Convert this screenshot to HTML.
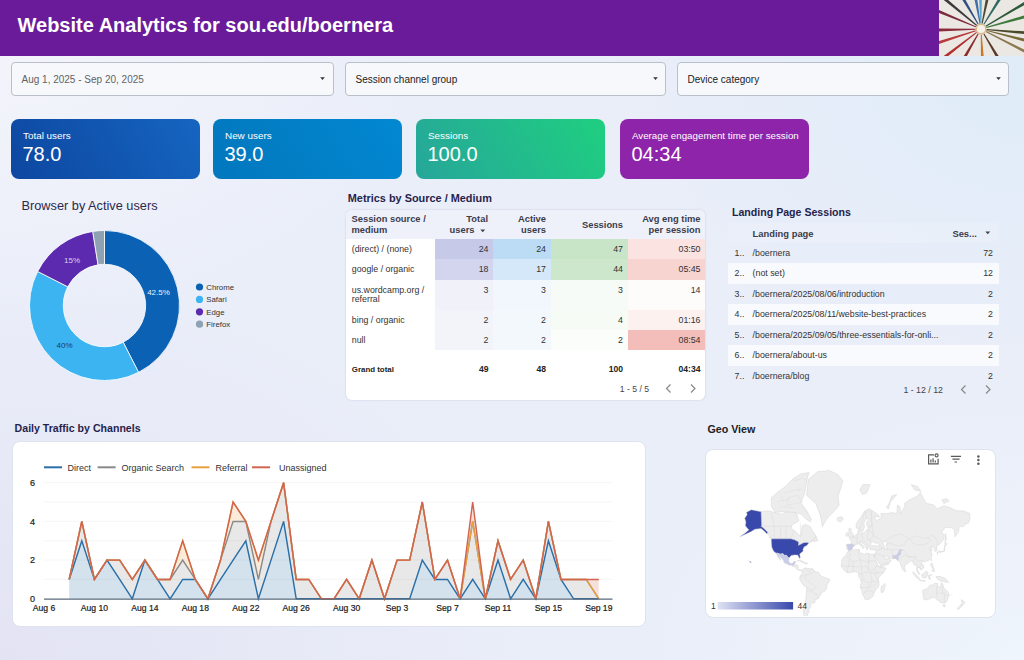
<!DOCTYPE html>
<html><head><meta charset="utf-8"><style>
html,body{margin:0;padding:0;}
body{width:1024px;height:660px;overflow:hidden;position:relative;font-family:"Liberation Sans", sans-serif;background:radial-gradient(ellipse 420px 260px at 0px 60px, rgba(244,245,251,0.9), rgba(244,245,251,0) 100%),radial-gradient(ellipse 380px 260px at 1024px 660px, rgba(240,246,252,0.85), rgba(240,246,252,0) 100%),radial-gradient(ellipse 520px 380px at 0px 660px, rgba(226,226,243,0.9), rgba(226,226,243,0) 100%),radial-gradient(ellipse 420px 300px at 1024px 80px, rgba(222,236,248,0.9), rgba(222,236,248,0) 100%),#eaeef9;}
.t{position:absolute;white-space:nowrap;font-family:"Liberation Sans", sans-serif;}
</style></head><body>
<div style="position:absolute;left:0px;top:0px;width:1024px;height:56px;background:#6a1b9a;"></div><div class="t" style="left:17.5px;top:15.37px;font-size:20px;line-height:20px;font-weight:bold;color:#ffffff;">Website Analytics for sou.edu/boernera</div><svg style="position:absolute;left:939px;top:0" width="85" height="56" viewBox="0 0 85 56"><rect width="85" height="56" fill="#ebe8e4"/><path d="M38.08,25.11 L4.88,-3.71 L2.96,-1.40 L37.45,25.88Z" fill="#3a3a3a"/><path d="M39.65,24.00 L24.27,-4.21 L21.68,-2.69 L38.79,24.51Z" fill="#2f4f7f"/><path d="M41.56,23.50 L37.80,-4.20 L34.84,-3.69 L40.57,23.66Z" fill="#3f6fa8"/><path d="M42.41,23.49 L42.93,-4.03 L39.93,-3.97 L41.41,23.51Z" fill="#5aa6d0"/><path d="M43.60,23.72 L50.28,-3.61 L47.34,-4.22 L42.62,23.51Z" fill="#4a4a30"/><path d="M45.33,24.59 L63.38,-2.61 L60.83,-4.19 L44.48,24.06Z" fill="#2f6a60"/><path d="M46.99,26.63 L89.21,2.86 L87.68,0.27 L46.48,25.77Z" fill="#2f5a3a"/><path d="M47.43,28.00 L89.26,17.37 L88.45,14.48 L47.16,27.04Z" fill="#3c7a3a"/><path d="M47.44,29.97 L88.86,34.54 L89.11,31.55 L47.52,28.97Z" fill="#4a4a2a"/><path d="M47.20,30.85 L88.50,42.44 L89.25,39.54 L47.45,29.88Z" fill="#7a6a3a"/><path d="M46.67,31.95 L87.88,54.16 L89.24,51.49 L47.12,31.06Z" fill="#8a7a50"/><path d="M44.37,33.99 L58.75,60.21 L61.33,58.68 L45.23,33.48Z" fill="#5a3a2a"/><path d="M41.77,34.52 L41.99,60.07 L44.99,59.92 L42.76,34.47Z" fill="#c8782a"/><path d="M38.82,33.51 L23.10,58.71 L25.70,60.21 L39.68,34.01Z" fill="#8a2a2a"/><path d="M37.34,31.96 L2.92,57.26 L4.75,59.63 L37.95,32.76Z" fill="#b03030"/><path d="M36.61,30.20 L-4.27,42.19 L-3.35,45.04 L36.91,31.15Z" fill="#b83a3a"/><path d="M36.49,28.63 L-4.03,28.60 L-3.96,31.59 L36.51,29.63Z" fill="#8a2a3a"/><path d="M37.12,26.42 L-3.12,8.58 L-4.27,11.35 L36.73,27.35Z" fill="#7a2a3a"/><circle cx="42" cy="29" r="4.8" fill="#f6f1e8" stroke="#d9b98c" stroke-width="1.4"/></svg><div style="position:absolute;left:11px;top:62px;width:323px;height:34px;box-sizing:border-box;background:#f7f8fb;border:1px solid #b9c0c9;border-radius:4px;"></div><div class="t" style="left:21.5px;top:74.73px;font-size:10px;line-height:10px;font-weight:normal;color:#5f6368;">Aug 1, 2025 - Sep 20, 2025</div><svg style="position:absolute;left:319px;top:76px" width="7" height="5"><path d="M1.2 1.3 L5.8 1.3 L3.5 3.9Z" fill="#333"/></svg><div style="position:absolute;left:345px;top:62px;width:321px;height:34px;box-sizing:border-box;background:#f7f8fb;border:1px solid #b9c0c9;border-radius:4px;"></div><div class="t" style="left:355.5px;top:74.73px;font-size:10px;line-height:10px;font-weight:normal;color:#202124;">Session channel group</div><svg style="position:absolute;left:652px;top:76px" width="7" height="5"><path d="M1.2 1.3 L5.8 1.3 L3.5 3.9Z" fill="#333"/></svg><div style="position:absolute;left:677px;top:62px;width:332px;height:34px;box-sizing:border-box;background:#f7f8fb;border:1px solid #b9c0c9;border-radius:4px;"></div><div class="t" style="left:687.5px;top:74.73px;font-size:10px;line-height:10px;font-weight:normal;color:#202124;">Device category</div><svg style="position:absolute;left:995px;top:76px" width="7" height="5"><path d="M1.2 1.3 L5.8 1.3 L3.5 3.9Z" fill="#333"/></svg><div style="position:absolute;left:11px;top:119px;width:189px;height:60px;background:linear-gradient(60deg,#0d47a1 0%,#1565c0 100%);border-radius:8px;"></div><div class="t" style="left:23.0px;top:131.22px;font-size:9.9px;line-height:9.9px;font-weight:normal;color:#ffffff;">Total users</div><div class="t" style="left:22.5px;top:143.57px;font-size:20px;line-height:20px;font-weight:normal;color:#ffffff;">78.0</div><div style="position:absolute;left:213px;top:119px;width:189px;height:60px;background:linear-gradient(60deg,#0277bd 0%,#0288d1 100%);border-radius:8px;"></div><div class="t" style="left:225.0px;top:131.22px;font-size:9.9px;line-height:9.9px;font-weight:normal;color:#ffffff;">New users</div><div class="t" style="left:224.5px;top:143.57px;font-size:20px;line-height:20px;font-weight:normal;color:#ffffff;">39.0</div><div style="position:absolute;left:416px;top:119px;width:189px;height:60px;background:linear-gradient(60deg,#26a69a 0%,#1fcf80 100%);border-radius:8px;"></div><div class="t" style="left:428.0px;top:131.22px;font-size:9.9px;line-height:9.9px;font-weight:normal;color:#ffffff;">Sessions</div><div class="t" style="left:427.5px;top:143.57px;font-size:20px;line-height:20px;font-weight:normal;color:#ffffff;">100.0</div><div style="position:absolute;left:620px;top:119px;width:189px;height:60px;background:#8e24aa;border-radius:8px;"></div><div class="t" style="left:632.0px;top:131.35px;font-size:9.75px;line-height:9.75px;font-weight:normal;color:#ffffff;">Average engagement time per session</div><div class="t" style="left:631.5px;top:143.57px;font-size:20px;line-height:20px;font-weight:normal;color:#ffffff;">04:34</div><div class="t" style="left:21.5px;top:199.81px;font-size:12.75px;line-height:12.75px;font-weight:normal;color:#2c2a4a;">Browser by Active users</div><svg style="position:absolute;left:0;top:0" width="300" height="400"><path d="M104.50,230.50 A75,75 0 0 1 138.55,372.33 L123.20,342.21 A41.2,41.2 0 0 0 104.50,264.30Z" fill="#0b62b4" stroke="#ffffff" stroke-width="0.8"/><path d="M138.55,372.33 A75,75 0 0 1 37.67,271.45 L67.79,286.80 A41.2,41.2 0 0 0 123.20,342.21Z" fill="#3db4f2" stroke="#ffffff" stroke-width="0.8"/><path d="M37.67,271.45 A75,75 0 0 1 92.77,231.42 L98.05,264.81 A41.2,41.2 0 0 0 67.79,286.80Z" fill="#5c2aaf" stroke="#ffffff" stroke-width="0.8"/><path d="M92.77,231.42 A75,75 0 0 1 104.50,230.50 L104.50,264.30 A41.2,41.2 0 0 0 98.05,264.81Z" fill="#8ea2b3" stroke="#ffffff" stroke-width="0.8"/><text x="158.5" y="294.5" font-size="8" fill="#e8f0ff" text-anchor="middle" font-family="Liberation Sans">42.5%</text><text x="64.5" y="347.5" font-size="8" fill="#1a3a5a" text-anchor="middle" font-family="Liberation Sans">40%</text><text x="72" y="263" font-size="8" fill="#d8d0f0" text-anchor="middle" font-family="Liberation Sans">15%</text><circle cx="199.5" cy="287.0" r="3.6" fill="#0b62b4"/><text x="206.3" y="289.9" font-size="7.8" fill="#333" font-family="Liberation Sans">Chrome</text><circle cx="199.5" cy="299.4" r="3.6" fill="#3db4f2"/><text x="206.3" y="302.3" font-size="7.8" fill="#333" font-family="Liberation Sans">Safari</text><circle cx="199.5" cy="311.8" r="3.6" fill="#5c2aaf"/><text x="206.3" y="314.7" font-size="7.8" fill="#333" font-family="Liberation Sans">Edge</text><circle cx="199.5" cy="324.2" r="3.6" fill="#8ea2b3"/><text x="206.3" y="327.1" font-size="7.8" fill="#333" font-family="Liberation Sans">Firefox</text></svg><div class="t" style="left:347.8px;top:192.77px;font-size:10.9px;line-height:10.9px;font-weight:bold;color:#261f4c;">Metrics by Source / Medium</div><div style="position:absolute;left:346px;top:210px;width:359px;height:190px;background:#ffffff;border-radius:6px;box-shadow:0 0 2px rgba(120,130,160,0.35);"></div><div style="position:absolute;left:346px;top:210px;width:359px;height:29px;background:#eef1fa;border-radius:6px 6px 0 0;"></div><div style="position:absolute;left:435px;top:239px;width:58px;height:20px;background:#c7c9e9;"></div><div style="position:absolute;left:493px;top:239px;width:58px;height:20px;background:#bcdcf6;"></div><div style="position:absolute;left:551px;top:239px;width:77px;height:20px;background:#c8e5c8;"></div><div style="position:absolute;left:628px;top:239px;width:77px;height:20px;background:#fbe3e1;"></div><div style="position:absolute;left:435px;top:259px;width:58px;height:21px;background:#d3d5ef;"></div><div style="position:absolute;left:493px;top:259px;width:58px;height:21px;background:#d4e8fa;"></div><div style="position:absolute;left:551px;top:259px;width:77px;height:21px;background:#cce7cc;"></div><div style="position:absolute;left:628px;top:259px;width:77px;height:21px;background:#f8d4d0;"></div><div style="position:absolute;left:435px;top:280px;width:58px;height:30px;background:#f1f1f9;"></div><div style="position:absolute;left:493px;top:280px;width:58px;height:30px;background:#f2f7fd;"></div><div style="position:absolute;left:551px;top:280px;width:77px;height:30px;background:#f7fbf7;"></div><div style="position:absolute;left:628px;top:280px;width:77px;height:30px;background:#fefbfb;"></div><div style="position:absolute;left:435px;top:310px;width:58px;height:20px;background:#f3f3fa;"></div><div style="position:absolute;left:493px;top:310px;width:58px;height:20px;background:#f3f8fd;"></div><div style="position:absolute;left:551px;top:310px;width:77px;height:20px;background:#f6fbf6;"></div><div style="position:absolute;left:628px;top:310px;width:77px;height:20px;background:#fdf1f0;"></div><div style="position:absolute;left:435px;top:330px;width:58px;height:20px;background:#f3f3fa;"></div><div style="position:absolute;left:493px;top:330px;width:58px;height:20px;background:#f3f8fd;"></div><div style="position:absolute;left:551px;top:330px;width:77px;height:20px;background:#fafdfa;"></div><div style="position:absolute;left:628px;top:330px;width:77px;height:20px;background:#f3beb9;"></div><div class="t" style="left:351.5px;top:215.09px;font-size:9.35px;line-height:9.35px;font-weight:bold;color:#3c3c4a;">Session source /</div><div class="t" style="left:351.5px;top:226.09px;font-size:9.35px;line-height:9.35px;font-weight:bold;color:#3c3c4a;">medium</div><div class="t" style="right:536.0px;top:215.09px;font-size:9.35px;line-height:9.35px;font-weight:bold;color:#3c3c4a;">Total</div><div class="t" style="right:549.5px;top:226.09px;font-size:9.35px;line-height:9.35px;font-weight:bold;color:#3c3c4a;">users</div><svg style="position:absolute;left:480px;top:229px" width="6" height="4"><path d="M0.3 0.5L5.2 0.5L2.75 3.3Z" fill="#444"/></svg><div class="t" style="right:478.0px;top:215.09px;font-size:9.35px;line-height:9.35px;font-weight:bold;color:#3c3c4a;">Active</div><div class="t" style="right:478.0px;top:226.09px;font-size:9.35px;line-height:9.35px;font-weight:bold;color:#3c3c4a;">users</div><div class="t" style="right:401.0px;top:220.59px;font-size:9.35px;line-height:9.35px;font-weight:bold;color:#3c3c4a;">Sessions</div><div class="t" style="right:323.5px;top:215.09px;font-size:9.35px;line-height:9.35px;font-weight:bold;color:#3c3c4a;">Avg eng time</div><div class="t" style="right:323.5px;top:226.09px;font-size:9.35px;line-height:9.35px;font-weight:bold;color:#3c3c4a;">per session</div><div class="t" style="left:351.8px;top:245.05px;font-size:8.8px;line-height:8.8px;font-weight:normal;color:#333;">(direct) / (none)</div><div class="t" style="right:535.5px;top:245.05px;font-size:8.8px;line-height:8.8px;font-weight:normal;color:#333;">24</div><div class="t" style="right:478.0px;top:245.05px;font-size:8.8px;line-height:8.8px;font-weight:normal;color:#333;">24</div><div class="t" style="right:401.0px;top:245.05px;font-size:8.8px;line-height:8.8px;font-weight:normal;color:#333;">47</div><div class="t" style="right:323.5px;top:245.05px;font-size:8.8px;line-height:8.8px;font-weight:normal;color:#333;">03:50</div><div class="t" style="left:351.8px;top:265.35px;font-size:8.8px;line-height:8.8px;font-weight:normal;color:#333;">google / organic</div><div class="t" style="right:535.5px;top:265.35px;font-size:8.8px;line-height:8.8px;font-weight:normal;color:#333;">18</div><div class="t" style="right:478.0px;top:265.35px;font-size:8.8px;line-height:8.8px;font-weight:normal;color:#333;">17</div><div class="t" style="right:401.0px;top:265.35px;font-size:8.8px;line-height:8.8px;font-weight:normal;color:#333;">44</div><div class="t" style="right:323.5px;top:265.35px;font-size:8.8px;line-height:8.8px;font-weight:normal;color:#333;">05:45</div><div class="t" style="left:351.8px;top:285.55px;font-size:8.8px;line-height:8.8px;font-weight:normal;color:#333;">us.wordcamp.org /</div><div class="t" style="right:535.5px;top:285.55px;font-size:8.8px;line-height:8.8px;font-weight:normal;color:#333;">3</div><div class="t" style="right:478.0px;top:285.55px;font-size:8.8px;line-height:8.8px;font-weight:normal;color:#333;">3</div><div class="t" style="right:401.0px;top:285.55px;font-size:8.8px;line-height:8.8px;font-weight:normal;color:#333;">3</div><div class="t" style="right:323.5px;top:285.55px;font-size:8.8px;line-height:8.8px;font-weight:normal;color:#333;">14</div><div class="t" style="left:351.8px;top:315.75px;font-size:8.8px;line-height:8.8px;font-weight:normal;color:#333;">bing / organic</div><div class="t" style="right:535.5px;top:315.75px;font-size:8.8px;line-height:8.8px;font-weight:normal;color:#333;">2</div><div class="t" style="right:478.0px;top:315.75px;font-size:8.8px;line-height:8.8px;font-weight:normal;color:#333;">2</div><div class="t" style="right:401.0px;top:315.75px;font-size:8.8px;line-height:8.8px;font-weight:normal;color:#333;">4</div><div class="t" style="right:323.5px;top:315.75px;font-size:8.8px;line-height:8.8px;font-weight:normal;color:#333;">01:16</div><div class="t" style="left:351.8px;top:335.75px;font-size:8.8px;line-height:8.8px;font-weight:normal;color:#333;">null</div><div class="t" style="right:535.5px;top:335.75px;font-size:8.8px;line-height:8.8px;font-weight:normal;color:#333;">2</div><div class="t" style="right:478.0px;top:335.75px;font-size:8.8px;line-height:8.8px;font-weight:normal;color:#333;">2</div><div class="t" style="right:401.0px;top:335.75px;font-size:8.8px;line-height:8.8px;font-weight:normal;color:#333;">2</div><div class="t" style="right:323.5px;top:335.75px;font-size:8.8px;line-height:8.8px;font-weight:normal;color:#333;">08:54</div><div class="t" style="left:351.8px;top:295.05px;font-size:8.8px;line-height:8.8px;font-weight:normal;color:#333;">referral</div><div class="t" style="left:351.8px;top:365.71px;font-size:7.9px;line-height:7.9px;font-weight:bold;color:#222;">Grand total</div><div class="t" style="right:535.5px;top:365.12px;font-size:8.6px;line-height:8.6px;font-weight:bold;color:#222;">49</div><div class="t" style="right:478.0px;top:365.12px;font-size:8.6px;line-height:8.6px;font-weight:bold;color:#222;">48</div><div class="t" style="right:401.0px;top:365.12px;font-size:8.6px;line-height:8.6px;font-weight:bold;color:#222;">100</div><div class="t" style="right:323.5px;top:365.12px;font-size:8.6px;line-height:8.6px;font-weight:bold;color:#222;">04:34</div><div class="t" style="right:375.0px;top:385.22px;font-size:8.6px;line-height:8.6px;font-weight:normal;color:#444;">1 - 5 / 5</div><svg style="position:absolute;left:662px;top:383px" width="40" height="12"><path d="M8.5 1.5L4.5 5.5L8.5 9.5" stroke="#888" stroke-width="1.2" fill="none"/><path d="M29 1.5L33 5.5L29 9.5" stroke="#888" stroke-width="1.2" fill="none"/></svg><div class="t" style="left:732.0px;top:207.23px;font-size:10.6px;line-height:10.6px;font-weight:bold;color:#261f4c;">Landing Page Sessions</div><div style="position:absolute;left:728px;top:223px;width:271px;height:20px;background:rgba(235,240,250,0.7);"></div><div class="t" style="left:752.6px;top:229.04px;font-size:9.4px;line-height:9.4px;font-weight:bold;color:#3c3c4a;">Landing page</div><div class="t" style="left:952.4px;top:229.04px;font-size:9.4px;line-height:9.4px;font-weight:bold;color:#3c3c4a;">Ses...</div><svg style="position:absolute;left:985px;top:231px" width="6" height="4"><path d="M0.3 0.5L5.2 0.5L2.75 3.3Z" fill="#444"/></svg><div class="t" style="left:734.6px;top:248.55px;font-size:8.8px;line-height:8.8px;font-weight:normal;color:#333;">1..</div><div class="t" style="left:752.6px;top:248.55px;font-size:8.8px;line-height:8.8px;font-weight:normal;color:#333;">/boernera</div><div class="t" style="right:31.0px;top:248.55px;font-size:8.8px;line-height:8.8px;font-weight:normal;color:#333;">72</div><div style="position:absolute;left:728px;top:263px;width:271px;height:20.5px;background:rgba(250,251,254,0.85);"></div><div class="t" style="left:734.6px;top:268.55px;font-size:8.8px;line-height:8.8px;font-weight:normal;color:#333;">2..</div><div class="t" style="left:752.6px;top:268.55px;font-size:8.8px;line-height:8.8px;font-weight:normal;color:#333;">(not set)</div><div class="t" style="right:31.0px;top:268.55px;font-size:8.8px;line-height:8.8px;font-weight:normal;color:#333;">12</div><div class="t" style="left:734.6px;top:289.55px;font-size:8.8px;line-height:8.8px;font-weight:normal;color:#333;">3..</div><div class="t" style="left:752.6px;top:289.55px;font-size:8.8px;line-height:8.8px;font-weight:normal;color:#333;">/boernera/2025/08/06/introduction</div><div class="t" style="right:31.0px;top:289.55px;font-size:8.8px;line-height:8.8px;font-weight:normal;color:#333;">2</div><div style="position:absolute;left:728px;top:304px;width:271px;height:20.5px;background:rgba(250,251,254,0.85);"></div><div class="t" style="left:734.6px;top:309.55px;font-size:8.8px;line-height:8.8px;font-weight:normal;color:#333;">4..</div><div class="t" style="left:752.6px;top:309.55px;font-size:8.8px;line-height:8.8px;font-weight:normal;color:#333;">/boernera/2025/08/11/website-best-practices</div><div class="t" style="right:31.0px;top:309.55px;font-size:8.8px;line-height:8.8px;font-weight:normal;color:#333;">2</div><div class="t" style="left:734.6px;top:330.55px;font-size:8.8px;line-height:8.8px;font-weight:normal;color:#333;">5..</div><div class="t" style="left:752.6px;top:330.55px;font-size:8.8px;line-height:8.8px;font-weight:normal;color:#333;">/boernera/2025/09/05/three-essentials-for-onli...</div><div class="t" style="right:31.0px;top:330.55px;font-size:8.8px;line-height:8.8px;font-weight:normal;color:#333;">2</div><div style="position:absolute;left:728px;top:345px;width:271px;height:20.5px;background:rgba(250,251,254,0.85);"></div><div class="t" style="left:734.6px;top:350.55px;font-size:8.8px;line-height:8.8px;font-weight:normal;color:#333;">6..</div><div class="t" style="left:752.6px;top:350.55px;font-size:8.8px;line-height:8.8px;font-weight:normal;color:#333;">/boernera/about-us</div><div class="t" style="right:31.0px;top:350.55px;font-size:8.8px;line-height:8.8px;font-weight:normal;color:#333;">2</div><div class="t" style="left:734.6px;top:371.55px;font-size:8.8px;line-height:8.8px;font-weight:normal;color:#333;">7..</div><div class="t" style="left:752.6px;top:371.55px;font-size:8.8px;line-height:8.8px;font-weight:normal;color:#333;">/boernera/blog</div><div class="t" style="right:31.0px;top:371.55px;font-size:8.8px;line-height:8.8px;font-weight:normal;color:#333;">2</div><div class="t" style="right:81.0px;top:386.05px;font-size:8.8px;line-height:8.8px;font-weight:normal;color:#444;">1 - 12 / 12</div><svg style="position:absolute;left:956px;top:384px" width="40" height="12"><path d="M9.5 1.5L5.5 5.5L9.5 9.5" stroke="#888" stroke-width="1.2" fill="none"/><path d="M30 1.5L34 5.5L30 9.5" stroke="#888" stroke-width="1.2" fill="none"/></svg><div class="t" style="left:14.6px;top:422.63px;font-size:10.6px;line-height:10.6px;font-weight:bold;color:#261f4c;">Daily Traffic by Channels</div><div style="position:absolute;left:12px;top:440.5px;width:634px;height:186px;box-sizing:border-box;background:#ffffff;border:1px solid #dfe3ee;border-radius:8px;"></div><svg style="position:absolute;left:0;top:0" width="660" height="640"><line x1="44" x2="612" y1="579.4" y2="579.4" stroke="#f6f6f6" stroke-width="1"/><line x1="44" x2="612" y1="560.1" y2="560.1" stroke="#f6f6f6" stroke-width="1"/><line x1="44" x2="612" y1="540.8" y2="540.8" stroke="#f6f6f6" stroke-width="1"/><line x1="44" x2="612" y1="521.4" y2="521.4" stroke="#f6f6f6" stroke-width="1"/><line x1="44" x2="612" y1="502.0" y2="502.0" stroke="#f6f6f6" stroke-width="1"/><line x1="44" x2="612" y1="482.7" y2="482.7" stroke="#f6f6f6" stroke-width="1"/><path d="M69.2,579.4 L81.8,540.8 L94.4,579.4 L107.0,560.1 L119.7,579.4 L132.3,598.8 L144.9,560.1 L157.5,579.4 L170.1,598.8 L182.7,579.4 L195.3,579.4 L207.9,598.8 L220.5,579.4 L233.1,560.1 L245.8,540.8 L258.4,598.8 L271.0,560.1 L283.6,521.4 L296.2,598.8 L308.8,598.8 L321.4,598.8 L334.0,598.8 L346.6,598.8 L359.2,598.8 L371.9,598.8 L384.5,598.8 L397.1,598.8 L409.7,598.8 L422.3,560.1 L434.9,579.4 L447.5,579.4 L460.1,598.8 L472.7,579.4 L485.3,598.8 L498.0,560.1 L510.6,598.8 L523.2,579.4 L535.8,598.8 L548.4,540.8 L561.0,579.4 L573.6,598.8 L586.2,598.8 L598.8,598.8 L598.8,598.8 L69.2,598.8Z" fill="rgba(42,111,168,0.2)" stroke="none"/><path d="M69.2,579.4 L81.8,521.4 L94.4,579.4 L107.0,560.1 L119.7,560.1 L132.3,579.4 L144.9,560.1 L157.5,579.4 L170.1,579.4 L182.7,560.1 L195.3,579.4 L207.9,598.8 L220.5,560.1 L233.1,521.4 L245.8,521.4 L258.4,579.4 L271.0,521.4 L283.6,482.7 L296.2,579.4 L308.8,579.4 L321.4,598.8 L334.0,598.8 L346.6,579.4 L359.2,598.8 L371.9,560.1 L384.5,598.8 L397.1,560.1 L409.7,560.1 L422.3,502.0 L434.9,579.4 L447.5,560.1 L460.1,598.8 L472.7,521.4 L485.3,598.8 L498.0,540.8 L510.6,579.4 L523.2,560.1 L535.8,598.8 L548.4,521.4 L561.0,579.4 L573.6,579.4 L586.2,579.4 L598.8,598.8 L598.8,598.8 L586.2,598.8 L573.6,598.8 L561.0,579.4 L548.4,540.8 L535.8,598.8 L523.2,579.4 L510.6,598.8 L498.0,560.1 L485.3,598.8 L472.7,579.4 L460.1,598.8 L447.5,579.4 L434.9,579.4 L422.3,560.1 L409.7,598.8 L397.1,598.8 L384.5,598.8 L371.9,598.8 L359.2,598.8 L346.6,598.8 L334.0,598.8 L321.4,598.8 L308.8,598.8 L296.2,598.8 L283.6,521.4 L271.0,560.1 L258.4,598.8 L245.8,540.8 L233.1,560.1 L220.5,579.4 L207.9,598.8 L195.3,579.4 L182.7,579.4 L170.1,598.8 L157.5,579.4 L144.9,560.1 L132.3,598.8 L119.7,579.4 L107.0,560.1 L94.4,579.4 L81.8,540.8 L69.2,579.4Z" fill="rgba(140,140,140,0.2)" stroke="none"/><path d="M69.2,579.4 L81.8,521.4 L94.4,579.4 L107.0,560.1 L119.7,560.1 L132.3,579.4 L144.9,560.1 L157.5,579.4 L170.1,579.4 L182.7,540.8 L195.3,579.4 L207.9,598.8 L220.5,560.1 L233.1,502.0 L245.8,521.4 L258.4,560.1 L271.0,521.4 L283.6,482.7 L296.2,579.4 L308.8,579.4 L321.4,598.8 L334.0,598.8 L346.6,579.4 L359.2,598.8 L371.9,560.1 L384.5,598.8 L397.1,560.1 L409.7,560.1 L422.3,502.0 L434.9,579.4 L447.5,560.1 L460.1,598.8 L472.7,521.4 L485.3,598.8 L498.0,540.8 L510.6,579.4 L523.2,560.1 L535.8,598.8 L548.4,521.4 L561.0,579.4 L573.6,579.4 L586.2,579.4 L598.8,598.8 L598.8,598.8 L586.2,579.4 L573.6,579.4 L561.0,579.4 L548.4,521.4 L535.8,598.8 L523.2,560.1 L510.6,579.4 L498.0,540.8 L485.3,598.8 L472.7,521.4 L460.1,598.8 L447.5,560.1 L434.9,579.4 L422.3,502.0 L409.7,560.1 L397.1,560.1 L384.5,598.8 L371.9,560.1 L359.2,598.8 L346.6,579.4 L334.0,598.8 L321.4,598.8 L308.8,579.4 L296.2,579.4 L283.6,482.7 L271.0,521.4 L258.4,579.4 L245.8,521.4 L233.1,521.4 L220.5,560.1 L207.9,598.8 L195.3,579.4 L182.7,560.1 L170.1,579.4 L157.5,579.4 L144.9,560.1 L132.3,579.4 L119.7,560.1 L107.0,560.1 L94.4,579.4 L81.8,521.4 L69.2,579.4Z" fill="rgba(233,160,63,0.2)" stroke="none"/><path d="M69.2,579.4 L81.8,521.4 L94.4,579.4 L107.0,560.1 L119.7,560.1 L132.3,579.4 L144.9,560.1 L157.5,579.4 L170.1,579.4 L182.7,540.8 L195.3,579.4 L207.9,598.8 L220.5,560.1 L233.1,502.0 L245.8,521.4 L258.4,560.1 L271.0,521.4 L283.6,482.7 L296.2,579.4 L308.8,579.4 L321.4,598.8 L334.0,598.8 L346.6,579.4 L359.2,598.8 L371.9,560.1 L384.5,598.8 L397.1,560.1 L409.7,560.1 L422.3,502.0 L434.9,579.4 L447.5,560.1 L460.1,598.8 L472.7,502.0 L485.3,598.8 L498.0,540.8 L510.6,579.4 L523.2,560.1 L535.8,598.8 L548.4,521.4 L561.0,579.4 L573.6,579.4 L586.2,579.4 L598.8,579.4 L598.8,598.8 L586.2,579.4 L573.6,579.4 L561.0,579.4 L548.4,521.4 L535.8,598.8 L523.2,560.1 L510.6,579.4 L498.0,540.8 L485.3,598.8 L472.7,521.4 L460.1,598.8 L447.5,560.1 L434.9,579.4 L422.3,502.0 L409.7,560.1 L397.1,560.1 L384.5,598.8 L371.9,560.1 L359.2,598.8 L346.6,579.4 L334.0,598.8 L321.4,598.8 L308.8,579.4 L296.2,579.4 L283.6,482.7 L271.0,521.4 L258.4,560.1 L245.8,521.4 L233.1,502.0 L220.5,560.1 L207.9,598.8 L195.3,579.4 L182.7,540.8 L170.1,579.4 L157.5,579.4 L144.9,560.1 L132.3,579.4 L119.7,560.1 L107.0,560.1 L94.4,579.4 L81.8,521.4 L69.2,579.4Z" fill="rgba(210,101,79,0.2)" stroke="none"/><path d="M69.2,579.4 L81.8,540.8 L94.4,579.4 L107.0,560.1 L119.7,579.4 L132.3,598.8 L144.9,560.1 L157.5,579.4 L170.1,598.8 L182.7,579.4 L195.3,579.4 L207.9,598.8 L220.5,579.4 L233.1,560.1 L245.8,540.8 L258.4,598.8 L271.0,560.1 L283.6,521.4 L296.2,598.8 L308.8,598.8 L321.4,598.8 L334.0,598.8 L346.6,598.8 L359.2,598.8 L371.9,598.8 L384.5,598.8 L397.1,598.8 L409.7,598.8 L422.3,560.1 L434.9,579.4 L447.5,579.4 L460.1,598.8 L472.7,579.4 L485.3,598.8 L498.0,560.1 L510.6,598.8 L523.2,579.4 L535.8,598.8 L548.4,540.8 L561.0,579.4 L573.6,598.8 L586.2,598.8 L598.8,598.8" fill="none" stroke="#2a6fa8" stroke-width="1.45" stroke-linejoin="miter"/><path d="M69.2,579.4 L81.8,521.4 L94.4,579.4 L107.0,560.1 L119.7,560.1 L132.3,579.4 L144.9,560.1 L157.5,579.4 L170.1,579.4 L182.7,560.1 L195.3,579.4 L207.9,598.8 L220.5,560.1 L233.1,521.4 L245.8,521.4 L258.4,579.4 L271.0,521.4 L283.6,482.7 L296.2,579.4 L308.8,579.4 L321.4,598.8 L334.0,598.8 L346.6,579.4 L359.2,598.8 L371.9,560.1 L384.5,598.8 L397.1,560.1 L409.7,560.1 L422.3,502.0 L434.9,579.4 L447.5,560.1 L460.1,598.8 L472.7,521.4 L485.3,598.8 L498.0,540.8 L510.6,579.4 L523.2,560.1 L535.8,598.8 L548.4,521.4 L561.0,579.4 L573.6,579.4 L586.2,579.4 L598.8,598.8" fill="none" stroke="#8a8a8a" stroke-width="1.45" stroke-linejoin="miter"/><path d="M69.2,579.4 L81.8,521.4 L94.4,579.4 L107.0,560.1 L119.7,560.1 L132.3,579.4 L144.9,560.1 L157.5,579.4 L170.1,579.4 L182.7,540.8 L195.3,579.4 L207.9,598.8 L220.5,560.1 L233.1,502.0 L245.8,521.4 L258.4,560.1 L271.0,521.4 L283.6,482.7 L296.2,579.4 L308.8,579.4 L321.4,598.8 L334.0,598.8 L346.6,579.4 L359.2,598.8 L371.9,560.1 L384.5,598.8 L397.1,560.1 L409.7,560.1 L422.3,502.0 L434.9,579.4 L447.5,560.1 L460.1,598.8 L472.7,521.4 L485.3,598.8 L498.0,540.8 L510.6,579.4 L523.2,560.1 L535.8,598.8 L548.4,521.4 L561.0,579.4 L573.6,579.4 L586.2,579.4 L598.8,598.8" fill="none" stroke="#e9a03f" stroke-width="1.45" stroke-linejoin="miter"/><path d="M69.2,579.4 L81.8,521.4 L94.4,579.4 L107.0,560.1 L119.7,560.1 L132.3,579.4 L144.9,560.1 L157.5,579.4 L170.1,579.4 L182.7,540.8 L195.3,579.4 L207.9,598.8 L220.5,560.1 L233.1,502.0 L245.8,521.4 L258.4,560.1 L271.0,521.4 L283.6,482.7 L296.2,579.4 L308.8,579.4 L321.4,598.8 L334.0,598.8 L346.6,579.4 L359.2,598.8 L371.9,560.1 L384.5,598.8 L397.1,560.1 L409.7,560.1 L422.3,502.0 L434.9,579.4 L447.5,560.1 L460.1,598.8 L472.7,502.0 L485.3,598.8 L498.0,540.8 L510.6,579.4 L523.2,560.1 L535.8,598.8 L548.4,521.4 L561.0,579.4 L573.6,579.4 L586.2,579.4 L598.8,579.4" fill="none" stroke="#d2654f" stroke-width="1.45" stroke-linejoin="miter"/><line x1="44" x2="612.5" y1="599.1" y2="599.1" stroke="#5a6a7a" stroke-width="1.3"/><text x="35" y="602.0" font-size="9" fill="#1a1a1a" stroke="#1a1a1a" stroke-width="0.2" text-anchor="end" font-family="Liberation Sans">0</text><text x="35" y="563.3" font-size="9" fill="#1a1a1a" stroke="#1a1a1a" stroke-width="0.2" text-anchor="end" font-family="Liberation Sans">2</text><text x="35" y="524.6" font-size="9" fill="#1a1a1a" stroke="#1a1a1a" stroke-width="0.2" text-anchor="end" font-family="Liberation Sans">4</text><text x="35" y="485.9" font-size="9" fill="#1a1a1a" stroke="#1a1a1a" stroke-width="0.2" text-anchor="end" font-family="Liberation Sans">6</text><text x="44.0" y="610.5" font-size="8.6" fill="#1a1a1a" stroke="#1a1a1a" stroke-width="0.2" text-anchor="middle" font-family="Liberation Sans">Aug 6</text><text x="94.4" y="610.5" font-size="8.6" fill="#1a1a1a" stroke="#1a1a1a" stroke-width="0.2" text-anchor="middle" font-family="Liberation Sans">Aug 10</text><text x="144.9" y="610.5" font-size="8.6" fill="#1a1a1a" stroke="#1a1a1a" stroke-width="0.2" text-anchor="middle" font-family="Liberation Sans">Aug 14</text><text x="195.3" y="610.5" font-size="8.6" fill="#1a1a1a" stroke="#1a1a1a" stroke-width="0.2" text-anchor="middle" font-family="Liberation Sans">Aug 18</text><text x="245.8" y="610.5" font-size="8.6" fill="#1a1a1a" stroke="#1a1a1a" stroke-width="0.2" text-anchor="middle" font-family="Liberation Sans">Aug 22</text><text x="296.2" y="610.5" font-size="8.6" fill="#1a1a1a" stroke="#1a1a1a" stroke-width="0.2" text-anchor="middle" font-family="Liberation Sans">Aug 26</text><text x="346.6" y="610.5" font-size="8.6" fill="#1a1a1a" stroke="#1a1a1a" stroke-width="0.2" text-anchor="middle" font-family="Liberation Sans">Aug 30</text><text x="397.1" y="610.5" font-size="8.6" fill="#1a1a1a" stroke="#1a1a1a" stroke-width="0.2" text-anchor="middle" font-family="Liberation Sans">Sep 3</text><text x="447.5" y="610.5" font-size="8.6" fill="#1a1a1a" stroke="#1a1a1a" stroke-width="0.2" text-anchor="middle" font-family="Liberation Sans">Sep 7</text><text x="498.0" y="610.5" font-size="8.6" fill="#1a1a1a" stroke="#1a1a1a" stroke-width="0.2" text-anchor="middle" font-family="Liberation Sans">Sep 11</text><text x="548.4" y="610.5" font-size="8.6" fill="#1a1a1a" stroke="#1a1a1a" stroke-width="0.2" text-anchor="middle" font-family="Liberation Sans">Sep 15</text><text x="598.8" y="610.5" font-size="8.6" fill="#1a1a1a" stroke="#1a1a1a" stroke-width="0.2" text-anchor="middle" font-family="Liberation Sans">Sep 19</text><line x1="44" x2="62" y1="467.3" y2="467.3" stroke="#2a6fa8" stroke-width="2"/><text x="67.4" y="470.5" font-size="9" fill="#333" font-family="Liberation Sans">Direct</text><line x1="97.6" x2="115.6" y1="467.3" y2="467.3" stroke="#8a8a8a" stroke-width="2"/><text x="121.5" y="470.5" font-size="9" fill="#333" font-family="Liberation Sans">Organic Search</text><line x1="191.5" x2="209.5" y1="467.3" y2="467.3" stroke="#e9a03f" stroke-width="2"/><text x="215.5" y="470.5" font-size="9" fill="#333" font-family="Liberation Sans">Referral</text><line x1="252" x2="270" y1="467.3" y2="467.3" stroke="#d2654f" stroke-width="2"/><text x="279" y="470.5" font-size="9" fill="#333" font-family="Liberation Sans">Unassigned</text></svg><div class="t" style="left:707.4px;top:424.44px;font-size:10.7px;line-height:10.7px;font-weight:bold;color:#222;">Geo View</div><div style="position:absolute;left:705px;top:449px;width:291px;height:169px;box-sizing:border-box;background:#ffffff;border:1px solid #dfe3ee;border-radius:8px;"></div><svg style="position:absolute;left:0;top:0" width="1024" height="660"><defs><clipPath id="gclip"><rect x="706" y="450" width="288" height="166" rx="7"/></clipPath><linearGradient id="ggrad" x1="0" x2="1"><stop offset="0" stop-color="#dfe2f3"/><stop offset="1" stop-color="#3949ab"/></linearGradient></defs><g clip-path="url(#gclip)"><path d="M760.6,511.5 L769.0,510.8 L776.2,513.0 L782.1,514.4 L790.6,508.8 L796.4,513.5 L799.0,520.8 L791.9,525.1 L791.2,528.1 L795.8,531.9 L799.0,534.7 L800.7,536.3 L801.3,532.5 L802.3,525.7 L805.6,524.4 L810.1,526.4 L812.7,531.3 L816.0,535.8 L813.4,540.3 L810.8,541.7 L808.8,543.1 L806.9,542.4 L803.6,542.7 L800.7,544.2 L798.4,545.4 L798.7,542.2 L794.5,539.8 L790.6,538.8 L772.3,538.8 L771.0,537.8 L767.1,532.5 L763.2,528.3 L760.6,526.4Z" fill="#ededed" stroke="#d2d2d2" stroke-width="0.45" stroke-linejoin="round"/><path d="M771.4,497.7 L777.4,492.3 L785.9,486.2 L792.0,479.5 L800.5,474.1 L808.9,472.5 L807.1,479.5 L804.3,494.7 L800.5,503.2 L807.7,512.3 L811.4,519.5 L810.2,522.0 L805.9,518.9 L801.1,514.1 L793.2,512.3 L783.5,511.7 L775.0,512.3 L771.4,506.2Z" fill="#ededed" stroke="#d2d2d2" stroke-width="0.45" stroke-linejoin="round"/><path d="M771.0,538.3 L769.0,537.0 L772.0,539.4Z" fill="#ededed" stroke="#d2d2d2" stroke-width="0.45" stroke-linejoin="round"/><path d="M810.8,541.3 L812.7,540.8 L813.4,541.7 L817.9,540.8 L816.0,536.3 L814.0,539.8Z" fill="#ededed" stroke="#d2d2d2" stroke-width="0.45" stroke-linejoin="round"/><path d="M794.8,564.0 L794.9,565.0 L797.7,565.1 L798.2,565.7 L798.1,568.4 L799.4,569.7 L802.0,570.0 L802.2,570.8 L800.3,570.7 L798.7,570.2 L796.6,569.0 L795.5,567.0 L792.8,566.2 L792.5,566.0Z" fill="#ededed" stroke="#d2d2d2" stroke-width="0.45" stroke-linejoin="round"/><path d="M797.1,561.0 L800.3,560.0 L804.1,562.1 L802.0,562.4 L799.0,560.5Z" fill="#ededed" stroke="#d2d2d2" stroke-width="0.45" stroke-linejoin="round"/><path d="M803.9,562.4 L807.8,563.3 L805.9,563.9 L804.0,563.4Z" fill="#ededed" stroke="#d2d2d2" stroke-width="0.45" stroke-linejoin="round"/><path d="M806.5,495.3 L808.3,479.5 L817.4,471.7 L829.5,470.5 L838.0,474.7 L842.9,480.8 L840.5,489.2 L838.0,496.5 L839.2,505.0 L834.4,511.1 L827.1,518.3 L822.3,526.8 L820.5,515.9 L815.6,503.2Z" fill="#ededed" stroke="#d2d2d2" stroke-width="0.45" stroke-linejoin="round"/><path d="M802.2,570.8 L803.3,568.7 L805.6,567.9 L808.8,568.6 L812.7,568.7 L815.3,571.7 L818.6,572.3 L819.9,574.4 L821.2,576.3 L823.8,577.2 L829.7,579.2 L829.8,580.5 L827.1,584.5 L826.6,588.2 L825.1,590.9 L821.2,592.8 L820.7,595.0 L817.9,599.0 L814.7,599.6 L815.3,602.4 L812.1,603.3 L810.1,605.0 L810.8,606.7 L808.5,609.9 L809.5,611.4 L807.5,614.4 L807.8,615.8 L805.6,617.0 L803.9,615.4 L803.3,609.9 L804.6,604.1 L805.9,598.4 L806.5,591.0 L806.7,587.5 L803.3,585.2 L799.7,579.5 L800.0,576.3 L802.3,573.3Z" fill="#ededed" stroke="#d2d2d2" stroke-width="0.45" stroke-linejoin="round"/><path d="M846.6,548.2 L846.6,544.5 L851.2,544.1 L851.5,541.3 L849.4,539.3 L851.5,538.1 L853.8,536.8 L855.4,535.2 L857.7,534.2 L858.0,530.1 L859.3,529.3 L859.3,532.5 L860.6,533.2 L864.2,532.7 L866.2,530.4 L868.1,529.7 L867.8,527.3 L871.4,526.4 L867.2,526.0 L866.4,523.0 L869.1,518.9 L866.5,518.2 L863.6,523.7 L864.7,526.3 L862.9,531.1 L860.8,531.9 L859.7,527.9 L857.7,528.7 L856.1,527.7 L856.1,523.7 L861.6,516.1 L864.9,510.8 L868.8,508.8 L872.7,510.8 L878.6,515.3 L879.6,516.9 L874.0,516.9 L876.6,520.8 L881.2,517.7 L880.9,513.5 L887.1,513.5 L891.6,512.6 L896.8,513.5 L897.5,505.0 L900.1,506.8 L900.4,513.5 L904.7,506.8 L904.7,503.2 L909.2,500.1 L917.7,495.9 L920.3,492.4 L926.2,503.5 L933.3,504.6 L937.3,508.8 L943.8,505.7 L950.3,507.8 L956.8,510.8 L963.3,510.8 L969.9,513.5 L969.9,519.3 L968.6,523.0 L965.9,524.0 L963.3,526.4 L958.8,526.7 L958.8,531.3 L954.9,536.8 L954.2,529.5 L951.6,527.7 L945.1,527.3 L941.5,533.0 L944.4,534.7 L943.8,539.3 L939.2,544.7 L936.9,544.9 L936.9,550.4 L935.0,551.6 L934.7,549.2 L933.7,547.1 L931.4,546.4 L932.0,547.9 L929.4,548.4 L930.4,549.6 L932.4,549.6 L931.1,551.6 L932.0,555.1 L931.7,556.6 L930.4,558.8 L928.5,560.3 L924.5,561.9 L923.2,561.2 L921.9,562.1 L921.5,563.3 L923.6,565.6 L923.6,568.1 L921.0,569.9 L920.8,568.7 L918.0,566.7 L917.2,569.0 L918.0,571.0 L920.0,574.3 L918.4,573.8 L916.7,570.4 L916.7,567.0 L916.1,564.7 L914.1,565.0 L912.8,561.6 L910.5,561.0 L909.2,562.3 L904.8,565.4 L904.7,569.0 L903.0,570.4 L902.1,568.4 L900.1,563.3 L899.8,561.6 L897.5,560.7 L895.9,558.5 L892.6,558.6 L889.7,558.1 L889.3,557.2 L886.1,556.6 L884.1,555.1 L883.6,555.8 L885.2,558.3 L886.1,558.8 L886.1,559.6 L888.7,558.0 L889.3,559.1 L891.3,560.5 L888.6,564.0 L886.4,564.8 L881.8,567.0 L880.7,567.2 L880.3,564.7 L877.9,561.2 L875.3,556.6 L874.8,556.9 L873.7,555.2 L875.3,553.9 L876.0,551.6 L876.0,550.0 L872.4,550.0 L870.1,549.6 L869.6,547.5 L871.4,546.2 L874.0,545.4 L877.3,546.2 L879.6,545.8 L878.6,544.0 L877.0,542.9 L874.3,543.1 L874.0,541.7 L872.4,541.3 L870.8,543.6 L870.8,545.6 L867.8,546.9 L868.1,548.9 L866.8,550.0 L866.2,547.4 L865.2,545.5 L861.0,542.0 L860.5,543.3 L862.9,545.8 L864.6,547.1 L862.9,548.8 L862.7,547.1 L860.3,545.5 L859.0,543.6 L856.4,544.5 L854.6,544.4 L854.6,545.5 L852.5,547.3 L852.3,549.2 L851.2,549.8 L848.9,550.4 L847.6,549.4Z" fill="#ededed" stroke="#d2d2d2" stroke-width="0.45" stroke-linejoin="round"/><path d="M883.1,542.7 L885.1,541.0 L887.1,542.2 L885.8,546.2 L887.7,549.4 L885.1,549.6 L884.4,547.1 L883.5,544.5Z" fill="#ffffff" stroke="#d2d2d2" stroke-width="0.45" stroke-linejoin="round"/><path d="M841.4,561.6 L842.1,559.5 L844.0,556.7 L846.3,554.7 L846.6,553.2 L848.6,550.6 L851.2,551.1 L854.5,549.8 L859.0,549.4 L859.7,551.2 L859.0,552.0 L860.3,552.8 L862.6,553.6 L865.4,554.7 L865.5,553.6 L867.5,553.1 L871.4,554.4 L873.4,554.1 L874.8,554.1 L875.0,556.6 L873.7,555.2 L876.6,561.6 L877.9,565.0 L880.7,567.4 L885.9,567.9 L885.8,568.7 L883.8,572.3 L879.6,576.6 L878.1,578.9 L878.9,582.5 L879.0,585.8 L875.3,590.7 L873.9,593.0 L873.7,595.0 L872.1,597.1 L869.3,599.2 L865.5,599.8 L864.4,598.8 L864.2,596.9 L862.3,593.9 L862.0,590.9 L860.3,587.5 L860.2,585.5 L861.4,582.7 L860.5,579.5 L858.4,576.1 L858.8,573.3 L858.0,572.7 L855.8,571.8 L853.8,571.5 L851.2,572.5 L847.6,572.7 L845.0,571.1 L842.7,568.4 L841.1,565.9 L841.7,562.6Z" fill="#ededed" stroke="#d2d2d2" stroke-width="0.45" stroke-linejoin="round"/><path d="M884.8,583.5 L885.4,585.8 L883.1,592.4 L881.2,592.4 L880.9,589.6 L881.4,586.2 L883.1,585.5Z" fill="#ededed" stroke="#d2d2d2" stroke-width="0.45" stroke-linejoin="round"/><path d="M912.7,572.0 L914.4,572.7 L918.4,576.9 L919.7,579.4 L917.0,578.2 L913.5,574.3Z" fill="#ededed" stroke="#d2d2d2" stroke-width="0.45" stroke-linejoin="round"/><path d="M921.6,574.6 L922.9,574.0 L926.2,571.1 L928.1,572.3 L927.5,574.9 L926.2,578.1 L922.6,577.6 L921.6,575.6Z" fill="#ededed" stroke="#d2d2d2" stroke-width="0.45" stroke-linejoin="round"/><path d="M919.3,580.0 L925.2,580.6 L925.2,581.3 L919.7,580.6Z" fill="#ededed" stroke="#d2d2d2" stroke-width="0.45" stroke-linejoin="round"/><path d="M928.5,575.3 L932.0,574.6 L929.4,576.3 L930.7,579.2 L929.1,579.2 L928.5,577.6Z" fill="#ededed" stroke="#d2d2d2" stroke-width="0.45" stroke-linejoin="round"/><path d="M936.0,576.3 L940.5,576.6 L945.1,578.2 L948.7,582.5 L943.8,581.5 L940.5,581.0 L936.6,578.2Z" fill="#ededed" stroke="#d2d2d2" stroke-width="0.45" stroke-linejoin="round"/><path d="M931.1,563.3 L932.2,563.3 L933.3,567.4 L935.0,571.0 L934.3,571.7 L932.0,571.0 L933.0,568.7 L931.7,566.7 L930.7,566.0Z" fill="#ededed" stroke="#d2d2d2" stroke-width="0.45" stroke-linejoin="round"/><path d="M937.3,554.3 L938.2,552.0 L940.5,552.4 L943.8,551.2 L944.1,548.4 L945.1,546.2 L944.8,542.2 L947.4,544.0 L945.7,545.4 L944.4,546.0 L944.8,548.8 L944.4,551.2 L941.8,551.6 L938.9,550.8 L937.3,552.2Z" fill="#ededed" stroke="#d2d2d2" stroke-width="0.45" stroke-linejoin="round"/><path d="M930.7,560.2 L931.7,558.5 L931.4,560.9Z" fill="#ededed" stroke="#d2d2d2" stroke-width="0.45" stroke-linejoin="round"/><path d="M904.7,569.2 L905.8,570.7 L905.3,571.7 L904.7,571.7Z" fill="#ededed" stroke="#d2d2d2" stroke-width="0.45" stroke-linejoin="round"/><path d="M922.6,590.3 L922.9,593.2 L923.6,599.2 L925.5,600.0 L929.4,599.0 L932.7,597.3 L934.7,597.6 L936.9,599.8 L938.6,600.4 L939.9,602.4 L942.5,602.7 L944.1,603.3 L946.4,602.0 L948.3,597.6 L948.7,594.6 L948.3,592.4 L946.7,590.7 L943.8,587.9 L943.3,585.5 L941.5,582.6 L940.8,584.2 L940.8,586.9 L939.5,587.2 L937.3,585.8 L937.9,583.5 L935.0,583.1 L933.3,584.2 L932.7,585.5 L930.7,584.8 L928.1,587.2 L927.5,588.6 L924.9,589.5Z" fill="#ededed" stroke="#d2d2d2" stroke-width="0.45" stroke-linejoin="round"/><path d="M942.9,604.8 L945.3,605.0 L944.4,607.2 L943.5,606.3Z" fill="#ededed" stroke="#d2d2d2" stroke-width="0.45" stroke-linejoin="round"/><path d="M961.2,599.6 L965.0,602.2 L964.0,603.7 L962.7,605.4 L960.7,604.5 L962.0,603.3 L961.4,600.8Z" fill="#ededed" stroke="#d2d2d2" stroke-width="0.45" stroke-linejoin="round"/><path d="M961.1,604.5 L962.2,605.4 L960.1,608.1 L957.5,609.7 L958.1,607.6Z" fill="#ededed" stroke="#d2d2d2" stroke-width="0.45" stroke-linejoin="round"/><path d="M848.8,537.8 L853.5,536.7 L853.6,535.0 L852.2,533.0 L851.2,531.4 L851.3,529.4 L850.5,528.2 L849.2,528.2 L848.5,530.7 L849.2,532.5 L850.5,534.3 L849.2,536.2Z" fill="#ededed" stroke="#d2d2d2" stroke-width="0.45" stroke-linejoin="round"/><path d="M848.6,535.8 L848.6,532.9 L847.6,532.2 L846.0,533.6 L846.0,536.2Z" fill="#ededed" stroke="#d2d2d2" stroke-width="0.45" stroke-linejoin="round"/><path d="M836.9,518.5 L838.2,517.1 L842.1,516.9 L843.4,519.3 L840.8,521.7 L837.8,521.1Z" fill="#ededed" stroke="#d2d2d2" stroke-width="0.45" stroke-linejoin="round"/><path d="M859.7,489.8 L862.9,484.6 L870.1,484.6 L866.8,493.0 L862.3,494.4Z" fill="#ededed" stroke="#d2d2d2" stroke-width="0.45" stroke-linejoin="round"/><path d="M886.4,507.8 L889.0,503.5 L891.6,495.9 L896.8,494.4 L890.3,502.3 L888.4,508.8Z" fill="#ededed" stroke="#d2d2d2" stroke-width="0.45" stroke-linejoin="round"/><path d="M945.1,541.7 L946.4,538.8 L945.7,533.6 L945.4,535.8Z" fill="#ededed" stroke="#d2d2d2" stroke-width="0.45" stroke-linejoin="round"/><path d="M911.2,484.6 L917.7,486.4 L921.0,491.4 L914.4,489.8Z" fill="#ededed" stroke="#d2d2d2" stroke-width="0.45" stroke-linejoin="round"/><path d="M941.8,499.8 L947.0,498.6 L949.0,501.1 L943.8,503.5Z" fill="#ededed" stroke="#d2d2d2" stroke-width="0.45" stroke-linejoin="round"/><path d="M751.4,509.8 L761.1,511.7 L761.7,526.8 L763.5,528.0 L767.7,532.3 L767.1,534.1 L764.1,531.1 L761.1,528.6 L755.0,529.2 L751.4,531.4 L746.5,533.8 L739.8,536.8 L745.3,532.9 L748.9,529.8 L747.1,528.0 L745.3,525.6 L745.9,522.0 L744.7,518.3 L747.1,514.7 L746.5,512.3Z" fill="#3949ab" stroke="#d2d2d2" stroke-width="0.45" stroke-linejoin="round"/><path d="M771.2,539.4 L772.3,538.8 L790.6,538.8 L794.5,539.8 L797.4,541.3 L798.7,542.2 L798.4,545.4 L800.7,544.2 L803.6,542.7 L806.9,542.4 L808.8,543.1 L806.9,545.6 L804.3,546.7 L802.9,549.6 L803.3,551.1 L799.7,553.9 L800.3,557.5 L799.7,558.6 L798.6,556.7 L797.7,555.1 L794.5,554.9 L791.2,555.4 L789.1,558.0 L787.6,556.9 L786.4,555.2 L784.4,555.5 L783.1,553.7 L780.1,554.1 L777.7,553.2 L776.2,553.2 L773.9,551.6 L772.6,549.2 L771.7,546.8Z" fill="#3949ab" stroke="#d2d2d2" stroke-width="0.45" stroke-linejoin="round"/><path d="M750.8,563.0 L751.4,562.1 L750.5,561.7 L749.5,561.2 L748.5,560.8 L750.1,561.9Z" fill="#3949ab" stroke="#d2d2d2" stroke-width="0.45" stroke-linejoin="round"/><path d="M776.2,553.2 L777.7,553.2 L780.1,554.1 L783.1,553.7 L784.4,555.5 L786.4,555.2 L787.6,556.9 L789.1,558.0 L788.7,560.9 L789.9,563.0 L790.9,563.5 L793.2,563.1 L793.5,561.6 L795.8,561.2 L794.8,564.0 L792.5,566.0 L790.9,565.0 L789.3,565.2 L784.0,562.6 L783.4,560.2 L781.4,558.2 L779.1,555.5 L777.8,554.3 L779.5,557.3 L780.8,560.2 L779.5,559.1 L777.8,556.6Z" fill="#c9cdea" stroke="#d2d2d2" stroke-width="0.45" stroke-linejoin="round"/><path d="M846.6,544.5 L851.2,544.1 L854.6,545.0 L854.6,545.5 L852.5,547.3 L852.3,549.2 L851.2,549.8 L848.9,550.4 L847.6,549.4 L847.9,547.9 L846.8,545.4Z" fill="#c9cdea" stroke="#d2d2d2" stroke-width="0.45" stroke-linejoin="round"/><path d="M892.6,558.6 L895.9,558.5 L897.5,560.3 L898.8,559.1 L898.1,556.7 L901.1,553.9 L900.7,551.6 L902.7,550.0 L899.4,549.6 L898.5,552.0 L897.5,553.9 L895.9,555.2 L892.3,555.5 L893.2,557.3Z" fill="#c9cdea" stroke="#d2d2d2" stroke-width="0.45" stroke-linejoin="round"/><path d="M870.8,511.7 L872.1,526.4 L873.4,535.8 L878.6,538.3 L883.1,541.7 L885.1,540.8 L891.6,536.8 L900.1,533.6 L909.2,538.8 L916.4,535.8 L922.9,538.3 L928.8,537.8 L931.4,534.7 L935.3,537.8 L937.9,542.7 L937.9,544.5" fill="none" stroke="#d6d6d6" stroke-width="0.4"/><path d="M887.1,545.4 L889.0,542.7 L892.9,544.0 L898.1,546.2 L904.7,544.9 L906.6,540.8 L909.2,538.8" fill="none" stroke="#d6d6d6" stroke-width="0.4"/><path d="M909.2,538.8 L912.5,542.7 L917.7,544.9 L924.9,544.5 L930.7,540.8 L928.8,537.8" fill="none" stroke="#d6d6d6" stroke-width="0.4"/><path d="M900.7,549.6 L904.7,551.2 L908.6,556.6 L912.5,556.6 L915.7,556.6 L916.4,559.5 L918.4,561.2 L921.6,560.5 L922.9,561.2" fill="none" stroke="#d6d6d6" stroke-width="0.4"/><path d="M881.2,547.5 L883.8,548.4 L887.7,549.4 L892.3,550.0 L892.3,555.5 L892.6,558.6" fill="none" stroke="#d6d6d6" stroke-width="0.4"/><path d="M879.6,545.8 L881.2,547.5 L881.5,549.6 L879.9,549.6 L876.0,550.0" fill="none" stroke="#d6d6d6" stroke-width="0.4"/><path d="M876.0,555.5 L877.9,553.6 L883.1,555.8 L885.1,558.8" fill="none" stroke="#d6d6d6" stroke-width="0.4"/><path d="M888.6,564.0 L886.4,563.0 L882.5,564.0 L880.7,564.5" fill="none" stroke="#d6d6d6" stroke-width="0.4"/><path d="M892.3,550.0 L896.2,549.4 L898.8,549.6 L900.7,549.6" fill="none" stroke="#d6d6d6" stroke-width="0.4"/><path d="M857.7,534.2 L857.1,538.8 L857.7,540.3 L856.4,541.7 L857.4,543.8" fill="none" stroke="#d6d6d6" stroke-width="0.4"/><path d="M861.6,533.6 L862.3,536.8 L863.6,539.0 L861.0,541.3 L857.1,542.2" fill="none" stroke="#d6d6d6" stroke-width="0.4"/><path d="M868.1,529.5 L868.1,533.6 L867.5,536.3 L867.2,539.8 L870.1,539.8 L870.8,542.2" fill="none" stroke="#d6d6d6" stroke-width="0.4"/><path d="M862.9,541.3 L865.5,541.7 L867.2,543.6 L867.5,545.8" fill="none" stroke="#d6d6d6" stroke-width="0.4"/><path d="M853.8,536.8 L855.1,538.3 L857.7,538.8" fill="none" stroke="#d6d6d6" stroke-width="0.4"/><path d="M864.9,510.8 L866.8,518.5" fill="none" stroke="#d6d6d6" stroke-width="0.4"/><path d="M860.3,527.9 L864.2,513.5 L870.8,510.8" fill="none" stroke="#d6d6d6" stroke-width="0.4"/><path d="M872.1,526.4 L871.7,510.8" fill="none" stroke="#d6d6d6" stroke-width="0.4"/><path d="M870.1,539.8 L873.4,535.8" fill="none" stroke="#d6d6d6" stroke-width="0.4"/><path d="M868.1,529.5 L870.8,531.3 L873.4,535.8" fill="none" stroke="#d6d6d6" stroke-width="0.4"/><path d="M846.8,556.9 L849.4,558.8 L853.2,561.6 L860.3,559.8 L868.1,562.3 L868.8,560.9 L876.0,560.9" fill="none" stroke="#d6d6d6" stroke-width="0.4"/><path d="M841.4,565.9 L844.7,566.0 L855.1,566.7 L861.6,567.0 L866.8,565.7 L868.1,570.0 L874.7,569.4 L876.0,566.0 L880.5,567.4" fill="none" stroke="#d6d6d6" stroke-width="0.4"/><path d="M858.8,573.3 L862.9,574.3 L864.6,572.3 L870.4,572.3 L874.7,573.0 L879.2,573.0 L883.8,572.3" fill="none" stroke="#d6d6d6" stroke-width="0.4"/><path d="M860.5,579.5 L862.9,580.5 L868.1,582.8 L872.1,581.2 L878.9,582.5" fill="none" stroke="#d6d6d6" stroke-width="0.4"/><path d="M860.3,587.5 L868.1,587.5 L872.1,585.8 L875.3,584.8" fill="none" stroke="#d6d6d6" stroke-width="0.4"/><path d="M862.3,593.9 L865.5,592.1 L871.4,590.3 L873.7,593.5" fill="none" stroke="#d6d6d6" stroke-width="0.4"/><path d="M859.0,549.4 L858.7,555.1 L860.0,559.5 L861.6,567.0 L862.0,574.3 L862.9,578.9" fill="none" stroke="#d6d6d6" stroke-width="0.4"/><path d="M868.8,553.6 L868.8,562.3 L868.1,570.0 L870.4,572.3 L871.4,576.3 L872.1,581.2 L868.1,587.5 L865.5,592.1" fill="none" stroke="#d6d6d6" stroke-width="0.4"/><path d="M849.2,550.6 L850.5,555.1 L846.8,556.9" fill="none" stroke="#d6d6d6" stroke-width="0.4"/><path d="M849.4,558.8 L848.9,565.4 L847.3,569.0 L847.3,572.7" fill="none" stroke="#d6d6d6" stroke-width="0.4"/><path d="M853.2,561.6 L853.2,566.7 L853.2,571.5" fill="none" stroke="#d6d6d6" stroke-width="0.4"/><path d="M874.7,573.0 L876.0,576.3 L878.9,582.5" fill="none" stroke="#d6d6d6" stroke-width="0.4"/><path d="M874.7,569.4 L877.3,572.3 L879.2,573.0" fill="none" stroke="#d6d6d6" stroke-width="0.4"/><path d="M806.9,587.5 L812.1,590.3 L814.7,588.9 L815.3,586.2 L813.4,584.8 L809.5,582.2 L804.9,578.2 L806.9,574.3 L808.8,574.3 L813.4,572.3 L815.3,571.7" fill="none" stroke="#d6d6d6" stroke-width="0.4"/><path d="M806.5,591.0 L808.8,591.7 L812.1,590.3 L814.7,593.9 L817.3,593.9 L817.3,598.4" fill="none" stroke="#d6d6d6" stroke-width="0.4"/><path d="M800.0,576.3 L803.3,575.9 L806.9,574.3" fill="none" stroke="#d6d6d6" stroke-width="0.4"/><path d="M805.6,567.9 L808.8,571.7 L812.7,568.7" fill="none" stroke="#d6d6d6" stroke-width="0.4"/><path d="M780.8,538.8 L780.8,526.4" fill="none" stroke="#d6d6d6" stroke-width="0.4"/><path d="M774.3,538.8 L774.3,526.4" fill="none" stroke="#d6d6d6" stroke-width="0.4"/><path d="M786.0,538.8 L786.0,526.4 L791.2,526.4" fill="none" stroke="#d6d6d6" stroke-width="0.4"/><path d="M760.6,526.4 L786.0,526.4" fill="none" stroke="#d6d6d6" stroke-width="0.4"/><path d="M790.6,538.8 L794.5,530.4" fill="none" stroke="#d6d6d6" stroke-width="0.4"/><path d="M800.7,536.3 L800.3,523.0" fill="none" stroke="#d6d6d6" stroke-width="0.4"/><path d="M774.3,526.4 L771.0,512.6" fill="none" stroke="#d6d6d6" stroke-width="0.4"/><path d="M936.6,585.5 L936.6,597.3" fill="none" stroke="#d6d6d6" stroke-width="0.4"/><path d="M942.5,586.5 L942.5,593.2 L944.4,593.2 L944.4,602.4" fill="none" stroke="#d6d6d6" stroke-width="0.4"/><path d="M936.6,593.2 L942.5,593.2" fill="none" stroke="#d6d6d6" stroke-width="0.4"/><path d="M944.4,595.4 L952.6,595.0" fill="none" stroke="#d6d6d6" stroke-width="0.4"/><path d="M921.0,569.9 L919.7,567.7 L917.7,566.7" fill="none" stroke="#d6d6d6" stroke-width="0.4"/><path d="M919.7,566.4 L921.6,564.3 L921.5,563.3" fill="none" stroke="#d6d6d6" stroke-width="0.4"/><path d="M912.8,561.6 L914.4,558.0 L915.7,556.6" fill="none" stroke="#d6d6d6" stroke-width="0.4"/><path d="M900.1,559.5 L902.1,556.6 L904.7,555.1 L909.9,557.3 L912.5,556.6" fill="none" stroke="#d6d6d6" stroke-width="0.4"/><path d="M777.4,501.4 L785.9,500.2 L792.0,496.5 L798.0,495.3" fill="none" stroke="#dadada" stroke-width="0.4"/><path d="M783.5,492.9 L790.8,491.1 L800.5,489.2" fill="none" stroke="#dadada" stroke-width="0.4"/><path d="M793.2,480.8 L802.9,478.3 L807.7,480.8" fill="none" stroke="#dadada" stroke-width="0.4"/><path d="M785.9,505.0 L795.6,503.8 L802.9,501.4" fill="none" stroke="#dadada" stroke-width="0.4"/><path d="M798.0,495.3 L802.9,505.0 L807.7,513.5" fill="none" stroke="#dadada" stroke-width="0.4"/><path d="M778.6,507.4 L787.1,506.8 L793.2,508.0" fill="none" stroke="#dadada" stroke-width="0.4"/><path d="M802.9,489.2 L798.0,490.5" fill="none" stroke="#dadada" stroke-width="0.4"/><path d="M789.5,496.5 L787.1,503.8" fill="none" stroke="#dadada" stroke-width="0.4"/><path d="M781.1,495.3 L783.5,501.4" fill="none" stroke="#dadada" stroke-width="0.4"/></g><rect x="717.6" y="602" width="75.5" height="7.5" fill="url(#ggrad)"/><text x="711" y="608.8" font-size="8.5" fill="#333" font-family="Liberation Sans">1</text><text x="797.5" y="608.8" font-size="8.5" fill="#333" font-family="Liberation Sans">44</text><g fill="none" stroke="#5a5a5a" stroke-width="1.2"><path d="M934 454.8H928.6V463.9H938.1V458.8"/><path d="M930.9 462.6V459.6M933.1 462.6V458.2M935.3 462.6V460.6"/><circle cx="936.6" cy="455.4" r="1.5"/><path d="M950.9 456.3H961M952.4 459.1H959.6M954.5 462H957"/></g><g fill="#5a5a5a"><circle cx="978.4" cy="456.6" r="1.25"/><circle cx="978.4" cy="460.1" r="1.25"/><circle cx="978.4" cy="463.7" r="1.25"/></g></svg>
</body></html>
